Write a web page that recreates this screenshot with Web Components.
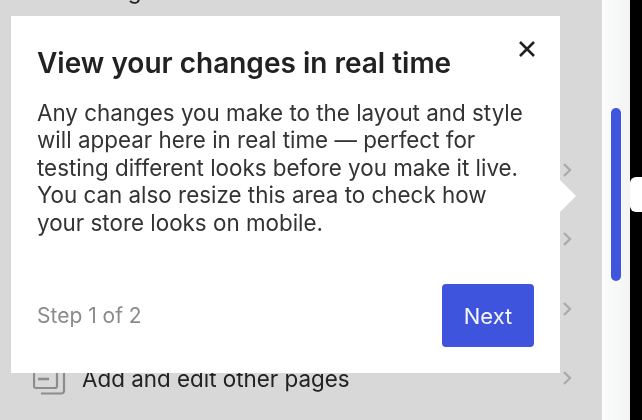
<!DOCTYPE html>
<html><head><meta charset="utf-8"><style>
html,body{margin:0;padding:0;width:642px;height:420px;overflow:hidden;font-family:Inter,"Liberation Sans",sans-serif}
</style></head><body>
<editor-shell>
  <nav-row slot="rows" style="--h:30px;--gap:60px;--pad:30px">Add listing</nav-row>
  <nav-row slot="rows"></nav-row>
  <nav-row slot="rows" chevron></nav-row>
  <nav-row slot="rows" chevron></nav-row>
  <nav-row slot="rows" chevron></nav-row>
  <nav-row slot="rows" chevron icon>Add and edit other pages</nav-row>
  <tour-card slot="overlay" heading="View your changes in real time" step="Step 1 of 2" action="Next">Any changes you make to the layout and style will appear here in real time — perfect for testing different looks before you make it live. You can also resize this area to check how your store looks on mobile.</tour-card>
</editor-shell>
<script>
class EditorShell extends HTMLElement{constructor(){super();this.attachShadow({mode:'open'}).innerHTML=`<style>
:host{display:flex;width:642px;height:420px;overflow:hidden;filter:blur(.35px)}
.main{width:602px;height:420px;background:#d8d8d8;position:relative;overflow:hidden;flex:none}
.rows{height:420px;box-sizing:border-box;padding-bottom:7px;display:flex;flex-direction:column;justify-content:flex-end}
.rail{width:28px;flex:none;background:linear-gradient(90deg,#fcfcfc,#f2f3f3);padding:108px 0 0 9px;box-sizing:border-box}
.thumb{width:10px;height:173px;border-radius:5px;background:#4055dd}
.edge{flex:1;background:#000;padding-top:177px}
.grip{height:35px;background:#fff;border-radius:6px 0 0 6px}
</style><div class="main"><div class="rows"><slot name="rows"></slot></div><slot name="overlay"></slot></div>
<div class="rail"><div class="thumb"></div></div><div class="edge"><div class="grip"></div></div>`}}
customElements.define('editor-shell',EditorShell);

class NavRow extends HTMLElement{constructor(){super();const r=this.attachShadow({mode:'open'});
const icon=this.hasAttribute('icon')?`<svg class="ic" width="34" height="24" viewBox="0 0 34 24" fill="none" stroke="#8c8c8c" stroke-width="2.2"><path d="M1 0V13a2 2 0 0 0 2 2H22a2 2 0 0 0 2-2V0"/><path d="M5 6H16" stroke-width="2.6"/><path d="M8 20.500H28.500a2.500 2.500 0 0 0 2.500-2.500V0"/></svg>`:'';
const chev=this.hasAttribute('chevron')?`<svg class="ch" width="10" height="16" viewBox="0 0 10 16" fill="none" stroke="#ababab" stroke-width="2.4"><path d="M2 2L8 8L2 14"/></svg>`:'';
r.innerHTML=`<style>
:host{display:flex;flex:none;align-items:center;box-sizing:border-box;height:var(--h,69.5px);margin-bottom:var(--gap,0);padding-left:var(--pad,33px);padding-right:30px;font-size:22.4px;color:#222}
.ic{flex:none;margin-right:15px;margin-top:14px}
.tx{flex:1;white-space:nowrap}
.ch{flex:none}
</style>${icon}<span class="tx"><slot></slot></span>${chev}`}}
customElements.define('nav-row',NavRow);

class TourCard extends HTMLElement{constructor(){super();const r=this.attachShadow({mode:'open'});
r.innerHTML=`<style>
:host{position:absolute;left:11px;top:16px;width:549px;height:357px;box-sizing:border-box;padding:29px 26px 26px 26px;background:#fff;display:flex;flex-direction:column;color:#2b2b2b}
:host::after{content:"";position:absolute;left:100%;top:164px;border-style:solid;border-width:16px 0 16px 16px;border-color:transparent transparent transparent #fff}
.head{display:flex;justify-content:space-between;align-items:flex-start}
h2{margin:0;font-size:28px;line-height:36px;font-weight:600;color:#222}
.x{flex:none;margin:-5px -2px 0 0;background:none;border:0;padding:0;display:block;width:18px;height:18px}
p{margin:17.500px 0 0;font-size:22.4px;line-height:27.6px;color:#333;width:490px}
.foot{margin-top:auto;display:flex;justify-content:space-between;align-items:center}
.step{font-size:21px;color:#8b8b8b}
.btn{width:92px;height:63px;border:0;border-radius:4px;background:#3f54dc;color:#f4f5fd;font:inherit;font-size:22px;padding:0}
</style>
<div class="head"><h2>${this.getAttribute('heading')}</h2>
<button class="x"><svg width="18" height="18" viewBox="0 0 18 18" fill="none" stroke="#222" stroke-width="2.6"><path d="M2 2L16 16M16 2L2 16"/></svg></button></div>
<p><slot></slot></p>
<div class="foot"><span class="step">${this.getAttribute('step')}</span><button class="btn">${this.getAttribute('action')}</button></div>`}}
customElements.define('tour-card',TourCard);
</script>
</body></html>
